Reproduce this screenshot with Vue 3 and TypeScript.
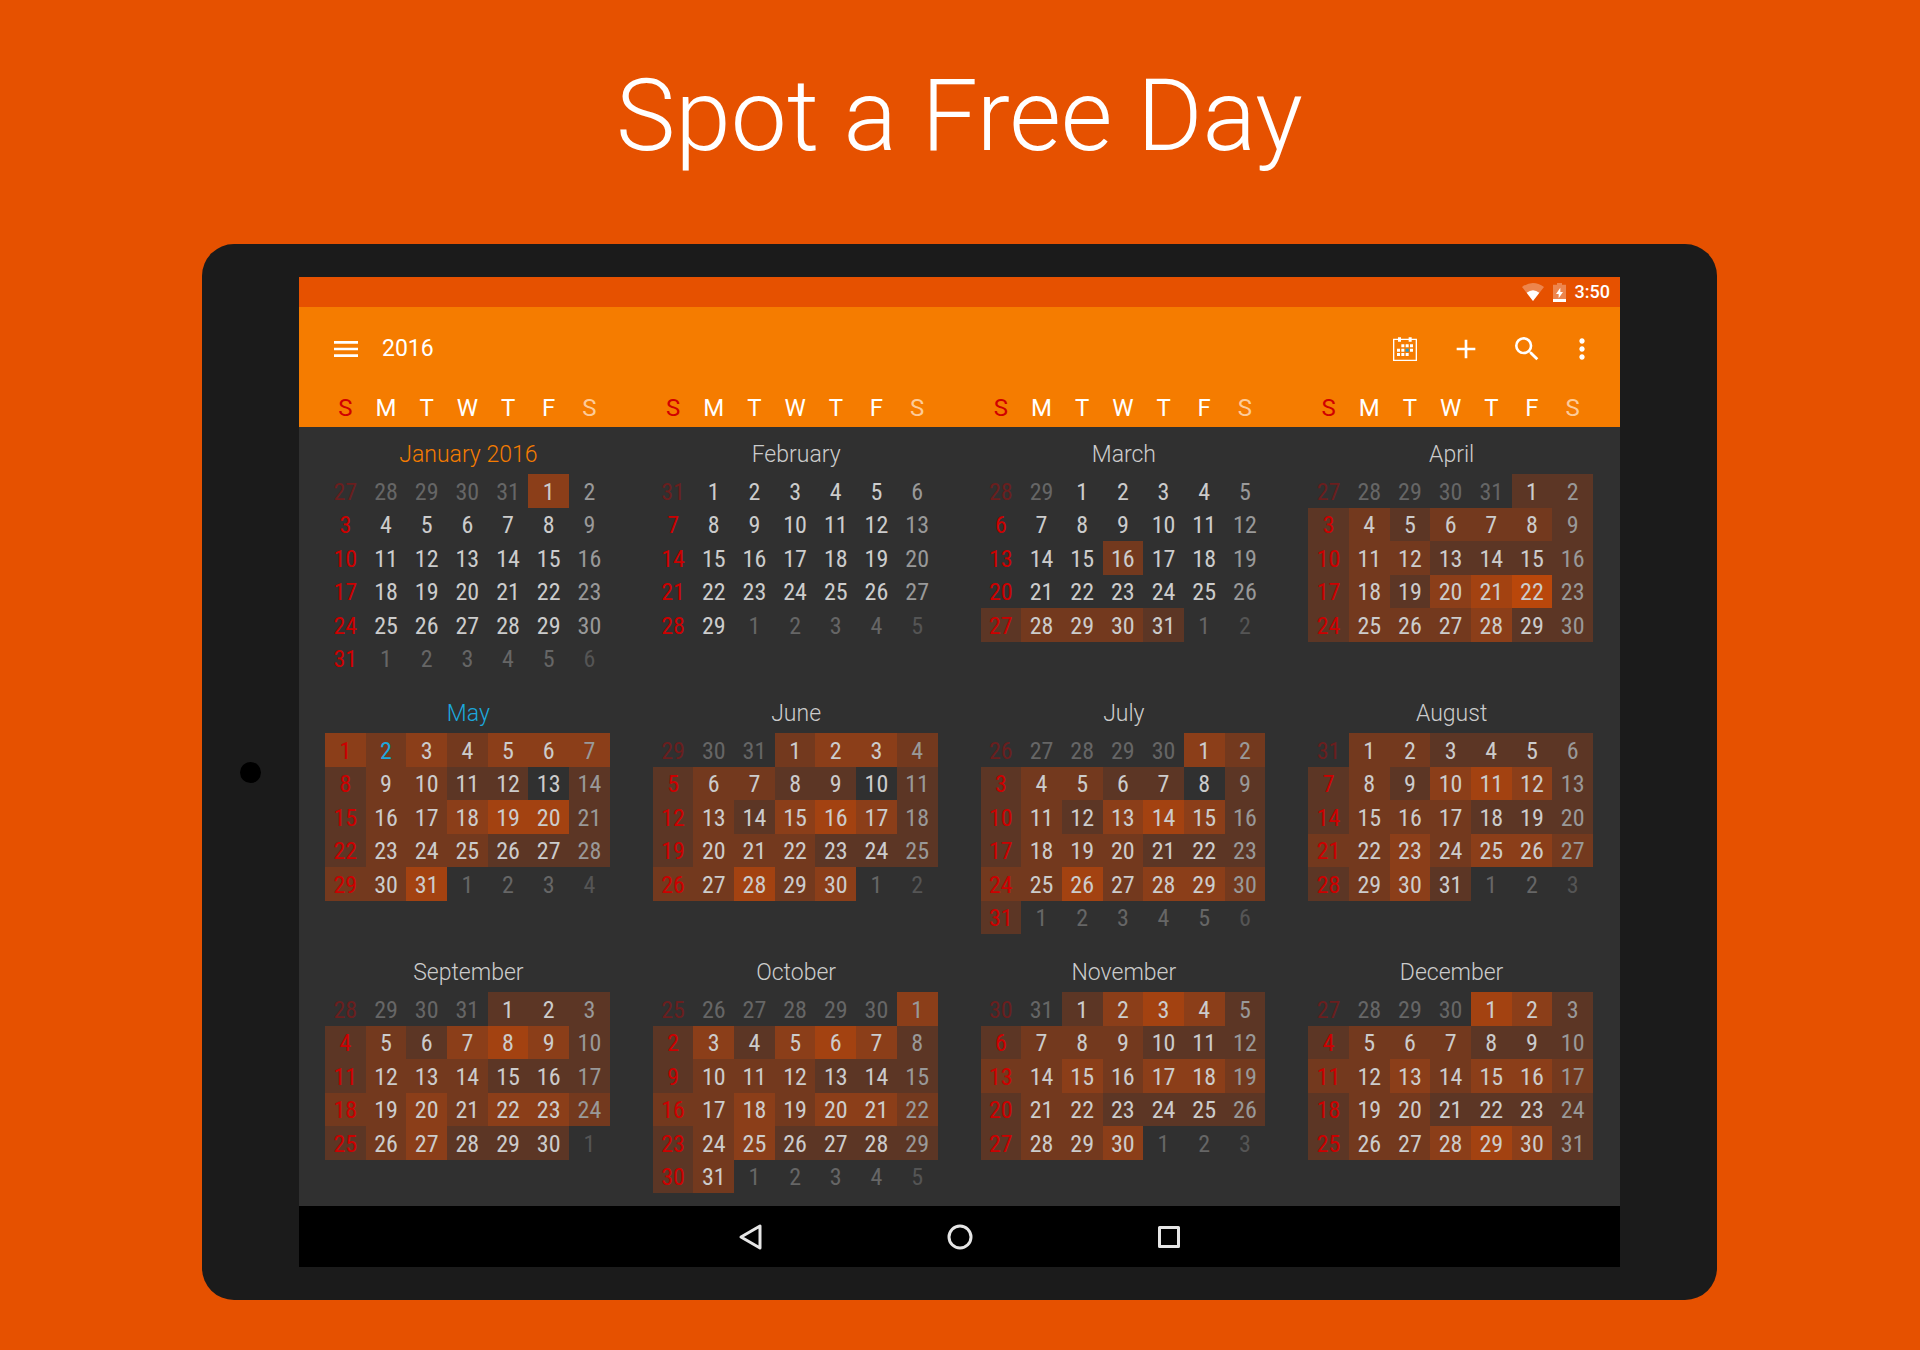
<script setup lang="ts">
interface Day {
  key: string
  label: number
  classes: string[]
}

interface Month {
  name: string
  title: string
  state: string
  weeks: Day[][]
}

const year = 2016
const today = { month: 4, day: 2 }
const weekdays = ['S', 'M', 'T', 'W', 'T', 'F', 'S']
const weekdayNames = ['Sunday', 'Monday', 'Tuesday', 'Wednesday', 'Thursday', 'Friday', 'Saturday']

const monthNames = [
  'January', 'February', 'March', 'April', 'May', 'June',
  'July', 'August', 'September', 'October', 'November', 'December',
]

// One digit per day of the month: how busy the day is, from 0 (free) to 5.
const busyness = [
  '3',
  '',
  '000000000000000200000000001' + '2221',
  '11' + '1212221' + '1221111' + '1213451' + '1222311',
  '3232333' + '1221101' + '1223441' + '1222111' + '224',
  '2332' + '1221101' + '1213431' + '1222111' + '22423',
  '32' + '1221101' + '1213431' + '1222111' + '2242332' + '1',
  '221111' + '1213431' + '1222111' + '2232332' + '1231',
  '111' + '1213431' + '1222111' + '2232332' + '123111',
  '3' + '1313431' + '1222111' + '2232332' + '1231111' + '12',
  '13431' + '1222111' + '2232332' + '1221111' + '1223',
  '431' + '1222111' + '2232332' + '1221111' + '1223431',
]

function buildMonth(month: number): Month {
  const offset = new Date(year, month, 1).getDay()
  const length = new Date(year, month + 1, 0).getDate()
  const rows = Math.ceil((offset + length) / 7)
  const weeks: Day[][] = []

  for (let row = 0; row < rows; row++) {
    const week: Day[] = []
    for (let col = 0; col < 7; col++) {
      const n = row * 7 + col - offset + 1
      const inside = n >= 1 && n <= length
      const classes: string[] = []
      if (col === 0) classes.push('sunday')
      if (col === 6) classes.push('saturday')
      if (!inside) classes.push('outside')
      if (month === today.month && n === today.day) classes.push('today')
      const level = inside ? Number(busyness[month][n - 1] ?? 0) : 0
      if (level > 0) classes.push(`level-${level}`)
      week.push({ key: `${row}-${col}`, label: new Date(year, month, n).getDate(), classes })
    }
    weeks.push(week)
  }

  return {
    name: monthNames[month],
    title: month === 0 ? `${monthNames[month]} ${year}` : monthNames[month],
    state: month === 0 ? 'first' : month === today.month ? 'current' : '',
    weeks,
  }
}

const months: Month[] = monthNames.map((_, i) => buildMonth(i))
</script>

<template>
  <main class="page">
    <h1 class="headline">Spot a Free Day</h1>

    <div class="tablet">
      <div class="bezel"><span class="camera"></span></div>

      <div class="screen">
        <div class="status-bar">
          <svg class="wifi" viewBox="0 0 66 54" aria-hidden="true">
            <path d="M0 12Q33 -12 66 12L33 54Z" fill="#fff" opacity=".3" />
            <path d="M14 29Q33 14 52 29L33 54Z" fill="#fff" />
          </svg>
          <svg class="battery" viewBox="0 0 39 57" aria-hidden="true">
            <path d="M0 5H12V0H27V5H39V48H0Z" fill="#fff" opacity=".3" />
            <path d="M0 48H39V57H0Z" fill="#fff" />
            <path d="M22 14L9 33H17V46L30 27H22Z" fill="#fff" />
          </svg>
          <time class="clock">3:50</time>
        </div>

        <header class="app-bar">
          <div class="toolbar">
            <button class="tool" type="button" aria-label="Menu">
              <svg class="icon" viewBox="0 0 24 24"><path d="M3 18h18v-2H3v2zm0-5h18v-2H3v2zm0-7v2h18V6H3z" /></svg>
            </button>
            <h2 class="year">{{ year }}</h2>
            <button class="tool" type="button" aria-label="Go to today">
              <svg class="calendar-icon" viewBox="0 0 72 72">
                <path d="M2 7H70V70H2Z" fill="none" stroke="#fff" stroke-width="4" />
                <path d="M15 1h9v13h-9zM47 1h9v13h-9z" />
                <path d="M25 22h9v9h-9zM38 22h9v9h-9zM51 22h9v9h-9z" />
                <path d="M12 35h9v9h-9zM25 35h9v9h-9zM51 35h9v9h-9z" />
                <path d="M12 48h9v9h-9zM25 48h9v9h-9zM38 48h9v9h-9z" />
                <path d="M38 35h9v9h-9z" fill="#1c9ed8" />
              </svg>
            </button>
            <button class="tool" type="button" aria-label="Add event">
              <svg class="icon" viewBox="0 0 24 24"><path d="M19 13h-6v6h-2v-6H5v-2h6V5h2v6h6v2z" /></svg>
            </button>
            <button class="tool" type="button" aria-label="Search">
              <svg class="icon" viewBox="0 0 24 24"><path d="M15.5 14h-.79l-.28-.27A6.471 6.471 0 0 0 16 9.5 6.5 6.5 0 1 0 9.5 16c1.61 0 3.09-.59 4.23-1.57l.27.28v.79l5 4.99L20.49 19l-4.99-5zm-6 0C7.01 14 5 11.99 5 9.5S7.01 5 9.5 5 14 7.01 14 9.5 11.99 14 9.5 14z" /></svg>
            </button>
            <button class="tool narrow" type="button" aria-label="More options">
              <svg class="icon" viewBox="0 0 24 24"><path d="M12 8c1.1 0 2-.9 2-2s-.9-2-2-2-2 .9-2 2 .9 2 2 2zm0 2c-1.1 0-2 .9-2 2s.9 2 2 2 2-.9 2-2-.9-2-2-2zm0 6c-1.1 0-2 .9-2 2s.9 2 2 2 2-.9 2-2-.9-2-2-2z" /></svg>
            </button>
          </div>

          <div class="weekday-bar">
            <div v-for="column in 4" :key="column" class="weekdays">
              <abbr
                v-for="(letter, i) in weekdays"
                :key="i"
                class="weekday"
                :class="{ sunday: i === 0, saturday: i === 6 }"
                :aria-label="weekdayNames[i]"
              >{{ letter }}</abbr>
            </div>
          </div>
        </header>

        <section class="months">
          <div v-for="month in months" :key="month.name" class="month">
            <table class="days">
              <caption class="month-title" :class="month.state">{{ month.title }}</caption>
              <tbody>
                <tr v-for="(week, w) in month.weeks" :key="w">
                  <td v-for="day in week" :key="day.key" :class="day.classes">{{ day.label }}</td>
                </tr>
              </tbody>
            </table>
          </div>
        </section>

        <nav class="nav-bar">
          <button class="nav-button" type="button" aria-label="Back">
            <svg class="nav-icon" viewBox="0 0 32 32"><path d="M25 5V27L6 16Z" /></svg>
          </button>
          <button class="nav-button" type="button" aria-label="Home">
            <svg class="nav-icon" viewBox="0 0 32 32"><circle cx="16" cy="16" r="11" /></svg>
          </button>
          <button class="nav-button" type="button" aria-label="Recent apps">
            <svg class="nav-icon" viewBox="0 0 32 32"><path d="M6.5 6.500H25.5V25.5H6.5Z" /></svg>
          </button>
        </nav>
      </div>
    </div>
  </main>
</template>

<style>
body {
  margin: 0;
  background: #e65100;
}
</style>

<style scoped>
.page {
  box-sizing: border-box;
  padding: 56px 203px 50px 202px;
  font-family: Roboto, "Noto Sans", sans-serif;
  color: #fff;
}

.headline {
  margin: 0 0 68px;
  font-size: 100px;
  font-weight: 300;
  line-height: 120px;
  text-align: center;
}

.tablet {
  display: grid;
  grid-template-columns: 97px 1fr 97px;
  padding: 33px 0;
  border-radius: 32px;
  background: #1b1b1b;
}

.bezel {
  display: flex;
  align-items: center;
  justify-content: center;
}

.camera {
  width: 21px;
  height: 21px;
  border-radius: 50%;
  background: #000;
}

.screen {
  min-width: 0;
  background: #303030;
}

.status-bar {
  display: flex;
  align-items: center;
  justify-content: flex-end;
  height: 30px;
  padding-right: 10px;
  background: #e65100;
}

.wifi {
  width: 22px;
  height: 18px;
  margin-right: 9px;
}

.battery {
  width: 13px;
  height: 19px;
  margin-right: 9px;
}

.clock {
  font-size: 18px;
  font-weight: 500;
  line-height: 30px;
}

.app-bar {
  background: #f57c00;
}

.toolbar {
  display: flex;
  align-items: center;
  height: 82px;
  padding: 1px 14px 0 16px;
}

.year {
  flex: 1;
  margin: 0 0 0 6px;
  font-size: 23px;
  font-weight: 400;
  line-height: 32px;
}

.tool,
.nav-button {
  display: flex;
  align-items: center;
  justify-content: center;
  margin: 0;
  padding: 0;
  border: 0;
  background: none;
  cursor: pointer;
}

.tool {
  width: 61px;
  height: 61px;
}

.tool.narrow {
  width: 49px;
}

.icon {
  width: 32px;
  height: 32px;
  fill: #fff;
}

.calendar-icon {
  width: 24px;
  height: 24px;
  fill: #fff;
}

.weekday-bar,
.months {
  display: grid;
  grid-template-columns: repeat(4, 1fr);
  column-gap: 43px;
  padding: 0 27px 0 26px;
}

.weekday-bar {
  padding-bottom: 1px;
}

.weekdays {
  display: grid;
  grid-template-columns: repeat(7, 1fr);
}

.weekday {
  font-size: 24px;
  line-height: 36px;
  text-align: center;
}

.weekday.sunday {
  color: #d00000;
}

.weekday.saturday {
  color: #fdcb99;
}

.months {
  row-gap: 11px;
  padding-bottom: 13px;
}

.days {
  width: 100%;
  table-layout: fixed;
  border-collapse: collapse;
}

.month-title {
  height: 47px;
  padding-left: 2px;
  font-size: 23px;
  font-weight: 300;
  line-height: 55px;
  color: #ccc;
}

.month-title.first {
  color: #f57c00;
}

.month-title.current {
  color: #1ca8dd;
}

td {
  height: 31px;
  padding: 2px 0 0;
  font-family: "Roboto Condensed", Roboto, "Noto Sans", sans-serif;
  font-size: 24px;
  line-height: 31px;
  text-align: center;
  color: #ccc;
}

tr:nth-child(odd) td {
  height: 32px;
}

td.saturday {
  color: #999;
}

td.outside {
  color: #666;
}

td.outside.saturday {
  color: #555;
}

td.sunday {
  color: #c00;
}

td.outside.sunday {
  color: #6a1e1e;
}

td.today {
  color: #1ca8dd;
}

.level-1 {
  background: #5c3625;
}

.level-2 {
  background: #73391e;
}

.level-3 {
  background: #8b3e19;
}

.level-4 {
  background: #a34211;
}

.level-5 {
  background: #b9470b;
}

.nav-bar {
  display: flex;
  justify-content: center;
  background: #000;
}

.nav-button {
  width: 209px;
  height: 61px;
}

.nav-icon {
  width: 32px;
  height: 32px;
  fill: none;
  stroke: #e6e6e6;
  stroke-width: 3;
  stroke-linejoin: round;
}
</style>
